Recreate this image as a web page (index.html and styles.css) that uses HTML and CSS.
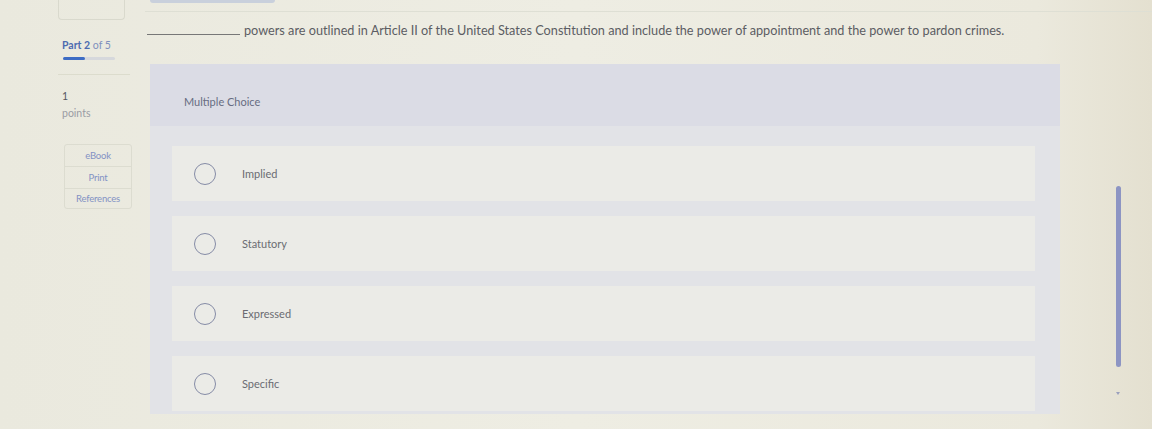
FILE: index.html
```html
<!DOCTYPE html>
<html>
<head>
<meta charset="utf-8">
<link rel="stylesheet" href="styles.css">
</head>
<body>
<div class="page">
  <aside class="sidebar">
    <div class="top-card"></div>
    <div class="part"><b>Part 2</b> of 5</div>
    <div class="progress"><div class="progress-fill"></div></div>
    <div class="divider"></div>
    <div class="points"><div class="points-num">1</div><div class="points-label">points</div></div>
    <div class="tools">
      <div class="tool">eBook</div>
      <div class="tool">Print</div>
      <div class="tool">References</div>
    </div>
  </aside>
  <main class="main">
    <div class="top-strip"><div class="top-tab"></div></div>
    <div class="question"><span class="blank"></span><span class="qtext">powers are outlined in Article II of the United States Constitution and include the power of appointment and the power to pardon crimes.</span></div>
    <section class="panel">
      <div class="panel-head">Multiple Choice</div>
      <div class="options">
        <div class="option"><span class="radio"></span><span class="label">Implied</span></div>
        <div class="option"><span class="radio"></span><span class="label">Statutory</span></div>
        <div class="option"><span class="radio"></span><span class="label">Expressed</span></div>
        <div class="option"><span class="radio"></span><span class="label">Specific</span></div>
      </div>
    </section>
  </main>
  <div class="scroll-thumb"></div>
  <div class="scroll-arrow"></div>
</div>
</body>
</html>
```
FILE: styles.css
```css
html, body {
  margin: 0;
  padding: 0;
  height: 100%;
}
body {
  background: linear-gradient(to right, #eae9de 0%, #eeede3 50%, #ebe9dd 90%, #e4e0d0 100%);
  font-family: "Lato", "Liberation Sans", sans-serif;
  overflow: hidden;
}
.page {
  position: relative;
  display: flex;
  height: 429px;
}
.sidebar {
  width: 145px;
  flex: none;
  padding-left: 58px;
  box-sizing: border-box;
}
.top-card {
  width: 67px;
  height: 20px;
  border: 1px solid #d9d9cd;
  border-top: none;
  border-radius: 0 0 4px 4px;
  box-sizing: border-box;
}
.part {
  margin-top: 19px;
  margin-left: 4px;
  font-size: 10.5px;
  color: #8090bd;
}
.part b {
  color: #4d6bb0;
  font-weight: 700;
}
.progress {
  margin-top: 6px;
  margin-left: 5px;
  width: 52px;
  height: 3px;
  background: #d6d8dc;
  border-radius: 2px;
}
.progress-fill {
  width: 22px;
  height: 3px;
  background: #3d6cc4;
  border-radius: 2px;
}
.divider {
  margin-top: 14px;
  width: 72px;
  height: 1px;
  background: #dcdccd;
}
.points {
  margin-top: 14px;
  margin-left: 4px;
}
.points-num {
  font-size: 10.5px;
  color: #55575f;
  line-height: 14px;
}
.points-label {
  margin-top: 3px;
  font-size: 10.5px;
  color: #9a9ca4;
  line-height: 14px;
}
.tools {
  margin-top: 24px;
  margin-left: 6px;
  width: 66px;
  border: 1px solid #dcdcd0;
  border-radius: 3px;
}
.tool {
  font-size: 9.5px;
  color: #8392c4;
  text-align: center;
  height: 21px;
  line-height: 21px;
  border-top: 1px solid #dcdcd0;
  letter-spacing: -0.2px;
}
.tool:first-child {
  border-top: none;
}
.tool:last-child {
  height: 19px;
  line-height: 19px;
}
.main {
  flex: 1;
  min-width: 0;
}
.top-strip {
  height: 11px;
  border-bottom: 1px solid #dedfd4;
}
.top-tab {
  margin-left: 5px;
  width: 125px;
  height: 3px;
  background: #c9d0dc;
  border-radius: 0 0 3px 3px;
}
.question {
  display: flex;
  align-items: flex-end;
  height: 26px;
  margin-left: 2px;
}
.blank {
  width: 93px;
  height: 1px;
  background: #777;
  margin-right: 4px;
  margin-bottom: 3px;
}
.qtext {
  font-size: 12.7px;
  color: #5c5d63;
  line-height: 15px;
}
.panel {
  margin-top: 26px;
  margin-left: 5px;
  width: 910px;
  height: 350px;
  background: #e2e3e7;
}
.panel-head {
  height: 62px;
  background: #dbdce5;
  padding-left: 34px;
  font-size: 11px;
  color: #676c82;
  line-height: 76px;
  box-sizing: border-box;
}
.options {
  display: flex;
  flex-direction: column;
  gap: 15px;
  padding: 20px 25px 0 22px;
}
.option {
  height: 55px;
  background: #ebebe7;
  display: flex;
  align-items: center;
  padding-left: 22px;
}
.radio {
  width: 22px;
  height: 22px;
  border: 1.5px solid #858ba6;
  border-radius: 50%;
  box-sizing: border-box;
  flex: none;
}
.label {
  margin-left: 26px;
  font-size: 11px;
  color: #6a6b72;
}
.scroll-thumb {
  position: absolute;
  left: 1116px;
  top: 186px;
  width: 5px;
  height: 181px;
  background: #8d95c3;
  border-radius: 3px;
}
.scroll-arrow {
  position: absolute;
  left: 1116px;
  top: 392px;
  width: 0;
  height: 0;
  border-left: 2.5px solid transparent;
  border-right: 2.5px solid transparent;
  border-top: 3px solid #9aa0bd;
}
```
